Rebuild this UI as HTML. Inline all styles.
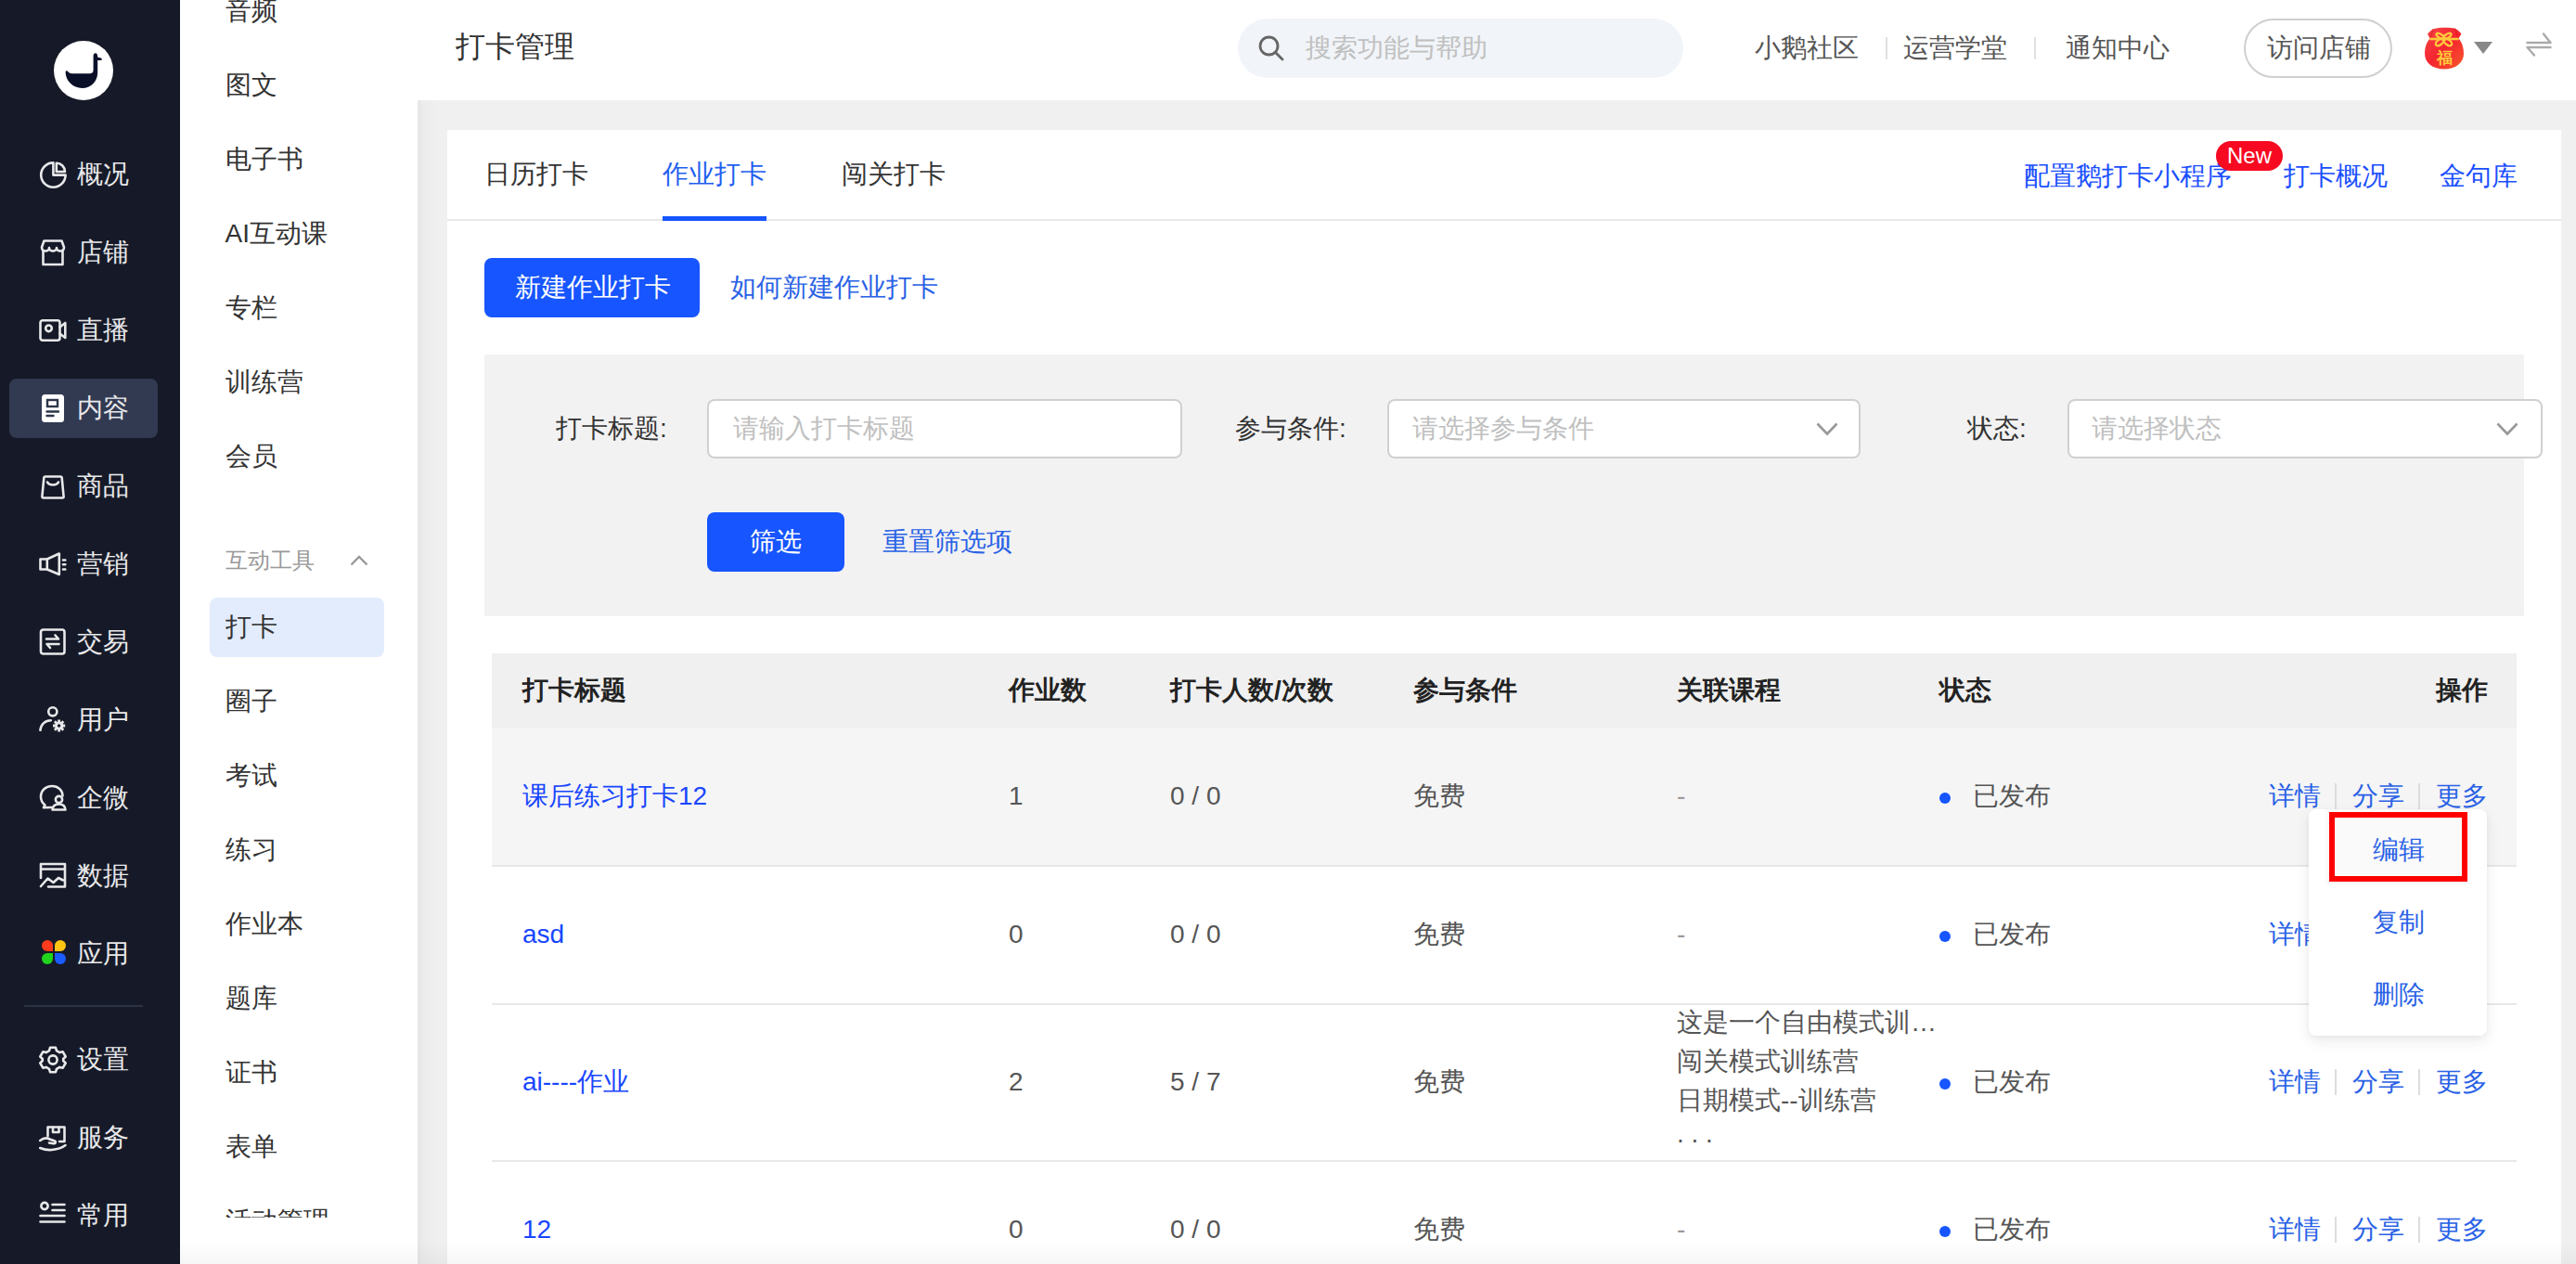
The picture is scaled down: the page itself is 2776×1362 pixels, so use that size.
<!DOCTYPE html><html><head><meta charset="utf-8"><style>
*{margin:0;padding:0;box-sizing:border-box}
html,body{width:2776px;height:1362px;overflow:hidden;background:#fff;font-family:"Liberation Sans",sans-serif}
.t{position:absolute;white-space:nowrap}
svg{position:absolute;overflow:visible}
</style></head><body><div style="position:absolute;left:0px;top:0px;width:194px;height:1362px;background:#161a28"></div>
<svg style="left:58px;top:44px" width="64" height="64" viewBox="0 0 64 64">
<circle cx="32" cy="32" r="32" fill="#fff"/>
<path fill="#0b1029" d="M12.6,33.6 C12.6,32 14.2,31.6 15.2,33 C16.2,34.4 17.4,35.2 19.4,35.2 L39.2,35.2 C41.2,35.2 42.6,33.8 42.6,31.6 L42.6,16.2 C42.6,14.2 43.6,13.2 45,13.2 C46.2,13.2 46.8,14.2 47,15.8 L47.2,17.6 L50.6,18.4 C52.2,18.8 52.2,21 50.6,21 L47.2,21 L47.2,34.2 C47.2,43.6 39.8,51 30.6,51 C20.6,51 12.6,43.2 12.6,33.6 Z"/>
</svg>
<div style="position:absolute;left:10px;top:408px;width:160px;height:64px;background:#323a52;border-radius:8px"></div>
<div class="t" style="left:83px;top:167.7px;font-size:28px;line-height:40px;color:#e8e8ea;font-weight:400;">概况</div>
<div class="t" style="left:83px;top:251.7px;font-size:28px;line-height:40px;color:#e8e8ea;font-weight:400;">店铺</div>
<div class="t" style="left:83px;top:335.7px;font-size:28px;line-height:40px;color:#e8e8ea;font-weight:400;">直播</div>
<div class="t" style="left:83px;top:419.7px;font-size:28px;line-height:40px;color:#e8e8ea;font-weight:400;">内容</div>
<div class="t" style="left:83px;top:503.7px;font-size:28px;line-height:40px;color:#e8e8ea;font-weight:400;">商品</div>
<div class="t" style="left:83px;top:587.7px;font-size:28px;line-height:40px;color:#e8e8ea;font-weight:400;">营销</div>
<div class="t" style="left:83px;top:671.7px;font-size:28px;line-height:40px;color:#e8e8ea;font-weight:400;">交易</div>
<div class="t" style="left:83px;top:755.7px;font-size:28px;line-height:40px;color:#e8e8ea;font-weight:400;">用户</div>
<div class="t" style="left:83px;top:839.7px;font-size:28px;line-height:40px;color:#e8e8ea;font-weight:400;">企微</div>
<div class="t" style="left:83px;top:923.7px;font-size:28px;line-height:40px;color:#e8e8ea;font-weight:400;">数据</div>
<div class="t" style="left:83px;top:1007.7px;font-size:28px;line-height:40px;color:#e8e8ea;font-weight:400;">应用</div>
<div class="t" style="left:83px;top:1121.5px;font-size:28px;line-height:40px;color:#e8e8ea;font-weight:400;">设置</div>
<div class="t" style="left:83px;top:1205.5px;font-size:28px;line-height:40px;color:#e8e8ea;font-weight:400;">服务</div>
<div class="t" style="left:83px;top:1289.5px;font-size:28px;line-height:40px;color:#e8e8ea;font-weight:400;">常用</div>
<div style="position:absolute;left:26px;top:1083px;width:128px;height:2px;background:#2b3244"></div>
<svg style="left:42px;top:173px" width="30" height="30" viewBox="0 0 30 30"><g stroke="#e8e8ea" stroke-width="2.6" fill="none" stroke-linecap="round" stroke-linejoin="round"><path d="M15.4,2.4 A13.2,13.2 0 1 0 28.6,15.6 L15.4,15.6 Z"/><path d="M18.8,2.8 A9.2,9.2 0 0 1 28,12 L18.8,12 Z"/></g></svg>
<svg style="left:42px;top:257px" width="30" height="30" viewBox="0 0 30 30"><g stroke="#e8e8ea" stroke-width="2.6" fill="none" stroke-linecap="round" stroke-linejoin="round"><path d="M4.5,13 L4.5,28 L25.5,28 L25.5,13"/><path d="M5.5,2.5 L24.5,2.5 L27,9.5 C27,12 25.2,13.5 23,13.5 C20.8,13.5 19,12 19,10 C19,12 17,13.5 15,13.5 C13,13.5 11,12 11,10 C11,12 9.2,13.5 7,13.5 C4.8,13.5 3,12 3,9.5 Z"/></g></svg>
<svg style="left:42px;top:341px" width="30" height="30" viewBox="0 0 30 30"><g stroke="#e8e8ea" stroke-width="2.6" fill="none" stroke-linecap="round" stroke-linejoin="round"><rect x="1.5" y="4.3" width="21" height="21.4" rx="2.5"/><path d="M22.5,11.5 L28.3,7 L28.3,23 L22.5,18.5"/><circle cx="10.5" cy="12.8" r="3.3"/></g></svg>
<svg style="left:45px;top:425px" width="24" height="30" viewBox="0 0 24 30">
<rect x="0" y="0" width="24" height="30" rx="3.5" fill="#fff"/>
<rect x="6" y="6" width="11" height="7" fill="none" stroke="#2d354a" stroke-width="2.4"/>
<path d="M5.5,18.5 L18,18.5 M5.5,23 L12.5,23" stroke="#2d354a" stroke-width="2.4" stroke-linecap="round"/>
</svg>
<svg style="left:42px;top:509px" width="30" height="30" viewBox="0 0 30 30"><g stroke="#e8e8ea" stroke-width="2.6" fill="none" stroke-linecap="round" stroke-linejoin="round"><path d="M7,4.5 L23,4.5 C24,4.5 24.6,5 24.7,6 L26.6,26 C26.7,27 26.2,27.5 25.2,27.5 L4.8,27.5 C3.8,27.5 3.3,27 3.4,26 L5.3,6 C5.4,5 6,4.5 7,4.5 Z"/><path d="M9,10.5 C11,14.5 19,14.5 21,10.5"/></g></svg>
<svg style="left:42px;top:593px" width="30" height="30" viewBox="0 0 30 30"><g stroke="#e8e8ea" stroke-width="2.6" fill="none" stroke-linecap="round" stroke-linejoin="round"><path d="M1.5,9.5 L8.8,9.5 L21.8,3.5 L21.8,26 L8.8,20.5 L1.5,20.5 Z"/><path d="M8.8,9.5 L8.8,20.5"/><path d="M26,10.5 L28.3,10.5 M26,15.2 L28.3,15.2 M26,20.5 L28.3,20.5"/></g></svg>
<svg style="left:42px;top:677px" width="30" height="30" viewBox="0 0 30 30"><g stroke="#e8e8ea" stroke-width="2.6" fill="none" stroke-linecap="round" stroke-linejoin="round"><rect x="2" y="1.5" width="25.5" height="26" rx="2.5"/><path d="M8,11.5 L21,11.5 L17.5,7.5 M21.5,17 L8.5,17 L12,21"/></g></svg>
<svg style="left:42px;top:761px" width="30" height="30" viewBox="0 0 30 30"><g stroke="#e8e8ea" stroke-width="2.6" fill="none" stroke-linecap="round" stroke-linejoin="round"><circle cx="14.8" cy="5.8" r="4.6"/><path d="M1.4,25.8 C2,19.5 6.8,15.2 12.8,15.2"/></g><g fill="#e8e8ea"><circle cx="21.6" cy="21" r="4.6"/></g><g stroke="#e8e8ea" stroke-width="2.8" stroke-linecap="butt"><path d="M21.6,14.4 L21.6,27.6 M15,21 L28.2,21 M16.9,16.3 L26.3,25.7 M26.3,16.3 L16.9,25.7"/></g><circle cx="21.6" cy="21" r="1.7" fill="#161a28"/></svg>
<svg style="left:42px;top:845px" width="30" height="30" viewBox="0 0 30 30"><g stroke="#e8e8ea" stroke-width="2.6" fill="none" stroke-linecap="round" stroke-linejoin="round"><path d="M13.5,25 L5,25.2 L6.5,22.5 C3.5,20.2 2,17 2,13.5 C2,7 7.2,2 14,2 C20.8,2 25.5,6.8 25.5,12.5"/><circle cx="21.5" cy="16.5" r="3.6"/><path d="M14.5,27.5 C14.8,23.5 17.8,21.5 21.5,21.5 C25.2,21.5 28.2,23.5 28.5,27.5 Z"/></g></svg>
<svg style="left:42px;top:929px" width="30" height="30" viewBox="0 0 30 30"><g stroke="#e8e8ea" stroke-width="2.6" fill="none" stroke-linecap="round" stroke-linejoin="round"><path d="M2,2 L28,2 L28,26.5 L10,26.5 M2,2 L2,17 M2,7.5 L28,7.5"/><path d="M2,26 L9.5,17.5 L15.5,22 L21,17 L26,19.5"/></g></svg>
<svg style="left:45px;top:1012.8px" width="26" height="26" viewBox="0 0 26 26">
<path d="M12,12 L6,12 A6,6 0 1 1 12,6 Z" fill="#fb3b1b"/>
<path d="M14,12 L20,12 A6,6 0 1 0 14,6 Z" fill="#fec414"/>
<path d="M12,14 L6,14 A6,6 0 1 0 12,20 Z" fill="#1fd41b"/>
<path d="M14,14 L20,14 A6,6 0 1 1 14,20 Z" fill="#1a5cff"/>
</svg>
<svg style="left:42px;top:1127px" width="30" height="30" viewBox="0 0 30 30"><g stroke="#e8e8ea" stroke-width="2.6" fill="none" stroke-linecap="round" stroke-linejoin="round"><path d="M12,1.8 L18,1.8 L19,5.2 L22.3,7.1 L25.7,6.3 L28.7,11.5 L26.2,14 L26.2,16 L28.7,18.5 L25.7,23.7 L22.3,22.9 L19,24.8 L18,28.2 L12,28.2 L11,24.8 L7.7,22.9 L4.3,23.7 L1.3,18.5 L3.8,16 L3.8,14 L1.3,11.5 L4.3,6.3 L7.7,7.1 L11,5.2 Z"/><circle cx="15" cy="15" r="4.6"/></g></svg>
<svg style="left:42px;top:1213px" width="30" height="30" viewBox="0 0 30 30"><g stroke="#e8e8ea" stroke-width="2.6" fill="none" stroke-linecap="round" stroke-linejoin="round"><path d="M9.5,11 L9.5,1.5 L27.5,1.5 L27.5,17 L22,17"/><path d="M15,1.5 L15,7 L21.5,7 L21.5,1.5"/><path d="M1.2,16 C4.5,13.5 8,12.5 11.5,14.5 L17,16.5 C18.5,17.2 18,19.5 16,19.2 L11,18.5"/><path d="M1.2,24 C5,25.5 9,26.5 14,26 C19,25.5 24.5,24 28.5,21"/></g></svg>
<svg style="left:42px;top:1295px" width="30" height="30" viewBox="0 0 30 30"><g stroke="#e8e8ea" stroke-width="2.6" fill="none" stroke-linecap="round" stroke-linejoin="round"><circle cx="6" cy="4.5" r="3.6"/><path d="M14.5,3 L27.5,3 M14.5,9 L27.5,9 M1.5,15 L27.5,15 M1.5,21.5 L27.5,21.5"/></g></svg>
<div style="position:absolute;left:194px;top:0px;width:256px;height:1362px;background:#fff"></div>
<div class="t" style="left:242.5px;top:-8.5px;font-size:28px;line-height:40px;color:#333;font-weight:400;">音频</div>
<div class="t" style="left:242.5px;top:71.5px;font-size:28px;line-height:40px;color:#333;font-weight:400;">图文</div>
<div class="t" style="left:242.5px;top:151.5px;font-size:28px;line-height:40px;color:#333;font-weight:400;">电子书</div>
<div class="t" style="left:242.5px;top:231.5px;font-size:28px;line-height:40px;color:#333;font-weight:400;">AI互动课</div>
<div class="t" style="left:242.5px;top:311.5px;font-size:28px;line-height:40px;color:#333;font-weight:400;">专栏</div>
<div class="t" style="left:242.5px;top:391.5px;font-size:28px;line-height:40px;color:#333;font-weight:400;">训练营</div>
<div class="t" style="left:242.5px;top:471.5px;font-size:28px;line-height:40px;color:#333;font-weight:400;">会员</div>
<div class="t" style="left:243px;top:583.5px;font-size:24px;line-height:40px;color:#999;font-weight:400;">互动工具</div>
<svg style="left:377px;top:598px" width="20" height="12" viewBox="0 0 20 12"><path d="M1.5,10.5 L10,2 L18.5,10.5" stroke="#999" stroke-width="2.4" fill="none"/></svg>
<div style="position:absolute;left:226px;top:644px;width:188px;height:64px;background:#e2ecfd;border-radius:8px"></div>
<div class="t" style="left:242.5px;top:655.5px;font-size:28px;line-height:40px;color:#333;font-weight:400;">打卡</div>
<div class="t" style="left:242.5px;top:735.5px;font-size:28px;line-height:40px;color:#333;font-weight:400;">圈子</div>
<div class="t" style="left:242.5px;top:815.5px;font-size:28px;line-height:40px;color:#333;font-weight:400;">考试</div>
<div class="t" style="left:242.5px;top:895.5px;font-size:28px;line-height:40px;color:#333;font-weight:400;">练习</div>
<div class="t" style="left:242.5px;top:975.5px;font-size:28px;line-height:40px;color:#333;font-weight:400;">作业本</div>
<div class="t" style="left:242.5px;top:1055.5px;font-size:28px;line-height:40px;color:#333;font-weight:400;">题库</div>
<div class="t" style="left:242.5px;top:1135.5px;font-size:28px;line-height:40px;color:#333;font-weight:400;">证书</div>
<div class="t" style="left:242.5px;top:1215.5px;font-size:28px;line-height:40px;color:#333;font-weight:400;">表单</div>
<div style="position:absolute;left:194px;top:1280px;width:256px;height:31.5px;overflow:hidden"><div class="t" style="left:48.5px;top:15.5px;font-size:28px;line-height:40px;color:#333">活动管理</div></div>
<div style="position:absolute;left:450px;top:0px;width:2326px;height:108px;background:#fff"></div>
<div class="t" style="left:491px;top:27.7px;font-size:32px;line-height:44px;color:#333;font-weight:400;">打卡管理</div>
<div style="position:absolute;left:1334px;top:20px;width:480px;height:64px;background:#f1f4f8;border-radius:32px"></div>
<svg style="left:1356px;top:38px" width="28" height="28" viewBox="0 0 28 28"><circle cx="11.5" cy="11.5" r="9.5" stroke="#666" stroke-width="2.8" fill="none"/><path d="M18.5,18.5 L26,26" stroke="#666" stroke-width="2.8" stroke-linecap="round"/></svg>
<div class="t" style="left:1407px;top:32.0px;font-size:28px;line-height:40px;color:#c0c0c0;font-weight:400;">搜索功能与帮助</div>
<div class="t" style="left:1891px;top:31.5px;font-size:28px;line-height:40px;color:#555;font-weight:400;">小鹅社区</div>
<div style="position:absolute;left:2032px;top:40px;width:2px;height:24px;background:#e0e0e0"></div>
<div class="t" style="left:2051px;top:31.5px;font-size:28px;line-height:40px;color:#555;font-weight:400;">运营学堂</div>
<div style="position:absolute;left:2192px;top:40px;width:2px;height:24px;background:#e0e0e0"></div>
<div class="t" style="left:2226px;top:31.5px;font-size:28px;line-height:40px;color:#555;font-weight:400;">通知中心</div>
<div style="position:absolute;left:2418px;top:20px;width:160px;height:64px;border:2px solid #cfcfcf;border-radius:32px;background:#fff"></div>
<div class="t" style="left:2443px;top:31.5px;font-size:28px;line-height:40px;color:#555;font-weight:400;">访问店铺</div>
<svg style="left:2605px;top:22px" width="60" height="60" viewBox="0 0 60 60">
<defs><linearGradient id="bg1" x1="0" y1="0" x2="1" y2="1"><stop offset="0" stop-color="#f44848"/><stop offset="0.5" stop-color="#f42530"/><stop offset="0.85" stop-color="#f64a2c"/><stop offset="1" stop-color="#fd8a38"/></linearGradient></defs>
<path d="M11,14.5 C14,11 16,9.5 18,9 C23,7.5 34,7.3 40,8.5 C43,9.5 45.5,12 47.5,14.5 L44.5,19.5 C48.5,24 50,30 50,36 C50,46 41,52.5 29,52.5 C17,52.5 8,46 8,36 C8,30 9.5,24 13.5,19.5 Z" fill="url(#bg1)"/>
<path d="M17,9.5 L14,19 M40.5,8.8 L44,19" stroke="#e0101a" stroke-width="1.2" opacity="0.5"/>
<path d="M13.3,20 L44.6,20" stroke="#ffc93c" stroke-width="2.6"/>
<g stroke="#ffc93c" stroke-width="2.4" fill="none">
<ellipse cx="24.6" cy="16.8" rx="4.6" ry="2.1" transform="rotate(32 24.6 16.8)"/>
<ellipse cx="32.4" cy="16.8" rx="4.6" ry="2.1" transform="rotate(-32 32.4 16.8)"/>
<ellipse cx="24" cy="23.6" rx="4.8" ry="2.8" transform="rotate(-38 24 23.6)"/>
<ellipse cx="33" cy="23.6" rx="4.8" ry="2.8" transform="rotate(38 33 23.6)"/>
</g>
<circle cx="28.5" cy="20" r="2.2" fill="#ffc93c"/>
<text x="29.2" y="45.5" font-size="17" text-anchor="middle" fill="#ffc93c" font-weight="700" font-family="Liberation Sans, sans-serif">福</text>
</svg>
<svg style="left:2666px;top:45px" width="20" height="13" viewBox="0 0 20 13"><path d="M0,0 L20,0 L10,13 Z" fill="#888"/></svg>
<svg style="left:2722px;top:35px" width="28" height="26" viewBox="0 0 28 26"><path d="M1.5,11 L26.5,11 L19,1.5 M26.5,16 L1.5,16 L9,24.5" stroke="#aaa" stroke-width="2.4" fill="none" stroke-linecap="round" stroke-linejoin="round"/></svg>
<div style="position:absolute;left:450px;top:108px;width:2326px;height:1254px;background:#f0f0f0"></div>
<div style="position:absolute;left:450px;top:108px;width:32px;height:1254px;background:linear-gradient(90deg,#e6e6e6 0px,#ececec 6px,#f0f0f0 22px)"></div>
<div style="position:absolute;left:482px;top:140px;width:2278px;height:1222px;background:#fff"></div>
<div class="t" style="left:522px;top:167.6px;font-size:28px;line-height:40px;color:#333;font-weight:400;">日历打卡</div>
<div class="t" style="left:714px;top:167.6px;font-size:28px;line-height:40px;color:#1f5ff0;font-weight:400;">作业打卡</div>
<div class="t" style="left:907px;top:167.6px;font-size:28px;line-height:40px;color:#333;font-weight:400;">闯关打卡</div>
<div style="position:absolute;left:482px;top:236px;width:2278px;height:2px;background:#e8e8e8"></div>
<div style="position:absolute;left:714px;top:233px;width:112px;height:5px;background:#1655ff"></div>
<div class="t" style="left:2181px;top:170.0px;font-size:28px;line-height:40px;color:#1a4fff;font-weight:400;">配置鹅打卡小程序</div>
<div style="position:absolute;left:2388px;top:152px;width:72px;height:32px;background:#f70a21;border-radius:16px"></div>
<div class="t" style="left:2388px;top:152px;width:72px;height:32px;font-size:24px;line-height:32px;color:#fff;text-align:center">New</div>
<div class="t" style="left:2461px;top:170.0px;font-size:28px;line-height:40px;color:#1a4fff;font-weight:400;">打卡概况</div>
<div class="t" style="left:2629px;top:170.0px;font-size:28px;line-height:40px;color:#1a4fff;font-weight:400;">金句库</div>
<div style="position:absolute;left:522px;top:278px;width:232px;height:64px;background:#1655ff;border-radius:8px"></div>
<div class="t" style="left:555px;top:290.0px;font-size:28px;line-height:40px;color:#fff;font-weight:400;">新建作业打卡</div>
<div class="t" style="left:787px;top:290.0px;font-size:28px;line-height:40px;color:#2a62e6;font-weight:400;">如何新建作业打卡</div>
<div style="position:absolute;left:522px;top:382px;width:2198px;height:282px;background:#f2f2f2"></div>
<div class="t" style="left:599px;top:442.0px;font-size:28px;line-height:40px;color:#333;font-weight:400;">打卡标题:</div>
<div style="position:absolute;left:762px;top:430px;width:512px;height:64px;background:#fff;border:2px solid #d0d0d0;border-radius:8px"></div>
<div class="t" style="left:790px;top:442.0px;font-size:28px;line-height:40px;color:#c0c0c0;font-weight:400;">请输入打卡标题</div>
<div class="t" style="left:1331px;top:442.0px;font-size:28px;line-height:40px;color:#333;font-weight:400;">参与条件:</div>
<div style="position:absolute;left:1495px;top:430px;width:510px;height:64px;background:#fff;border:2px solid #d0d0d0;border-radius:8px"></div>
<div class="t" style="left:1522px;top:442.0px;font-size:28px;line-height:40px;color:#c0c0c0;font-weight:400;">请选择参与条件</div>
<svg style="left:1957px;top:454px" width="24" height="16" viewBox="0 0 24 16"><path d="M1.5,2.5 L12,13.5 L22.5,2.5" stroke="#999" stroke-width="2.6" fill="none"/></svg>
<div class="t" style="left:2120px;top:442.0px;font-size:28px;line-height:40px;color:#333;font-weight:400;">状态:</div>
<div style="position:absolute;left:2228px;top:430px;width:512px;height:64px;background:#fff;border:2px solid #d0d0d0;border-radius:8px"></div>
<div class="t" style="left:2254px;top:442.0px;font-size:28px;line-height:40px;color:#c0c0c0;font-weight:400;">请选择状态</div>
<svg style="left:2690px;top:454px" width="24" height="16" viewBox="0 0 24 16"><path d="M1.5,2.5 L12,13.5 L22.5,2.5" stroke="#999" stroke-width="2.6" fill="none"/></svg>
<div style="position:absolute;left:762px;top:552px;width:148px;height:64px;background:#1655ff;border-radius:8px"></div>
<div class="t" style="left:808px;top:564.0px;font-size:28px;line-height:40px;color:#fff;font-weight:400;">筛选</div>
<div class="t" style="left:951px;top:564.0px;font-size:28px;line-height:40px;color:#2a62e6;font-weight:400;">重置筛选项</div>
<div style="position:absolute;left:530px;top:704px;width:2182px;height:80px;background:#f0f0f0"></div>
<div class="t" style="left:563px;top:723.5px;font-size:28px;line-height:40px;color:#222;font-weight:700;">打卡标题</div>
<div class="t" style="left:1087px;top:723.5px;font-size:28px;line-height:40px;color:#222;font-weight:700;">作业数</div>
<div class="t" style="left:1261px;top:723.5px;font-size:28px;line-height:40px;color:#222;font-weight:700;">打卡人数/次数</div>
<div class="t" style="left:1523px;top:723.5px;font-size:28px;line-height:40px;color:#222;font-weight:700;">参与条件</div>
<div class="t" style="left:1807px;top:723.5px;font-size:28px;line-height:40px;color:#222;font-weight:700;">关联课程</div>
<div class="t" style="left:2090px;top:723.5px;font-size:28px;line-height:40px;color:#222;font-weight:700;">状态</div>
<div class="t" style="left:2625px;top:723.5px;font-size:28px;line-height:40px;color:#222;font-weight:700;">操作</div>
<div style="position:absolute;left:530px;top:784px;width:2182px;height:148px;background:#f5f5f5"></div>
<div style="position:absolute;left:530px;top:932px;width:2182px;height:2px;background:#e8e8e8"></div>
<div style="position:absolute;left:530px;top:1081px;width:2182px;height:2px;background:#e8e8e8"></div>
<div style="position:absolute;left:530px;top:1250px;width:2182px;height:2px;background:#e8e8e8"></div>
<div class="t" style="left:563px;top:837.5px;font-size:28px;line-height:40px;color:#1846ff;font-weight:400;">课后练习打卡12</div>
<div class="t" style="left:1087px;top:837.5px;font-size:28px;line-height:40px;color:#555;font-weight:400;">1</div>
<div class="t" style="left:1261px;top:837.5px;font-size:28px;line-height:40px;color:#555;font-weight:400;">0 / 0</div>
<div class="t" style="left:1523px;top:837.5px;font-size:28px;line-height:40px;color:#555;font-weight:400;">免费</div>
<div class="t" style="left:1807px;top:837.5px;font-size:28px;line-height:40px;color:#999;font-weight:400;">-</div>
<div style="position:absolute;left:2090px;top:853.5px;width:12px;height:12px;background:#1655ff;border-radius:50%"></div>
<div class="t" style="left:2126px;top:837.5px;font-size:28px;line-height:40px;color:#555;font-weight:400;">已发布</div>
<div class="t" style="left:2445px;top:837.5px;font-size:28px;line-height:40px;color:#2a62e6;font-weight:400;">详情</div>
<div style="position:absolute;left:2516px;top:843.5px;width:2px;height:28px;background:#ddd"></div>
<div class="t" style="left:2535px;top:837.5px;font-size:28px;line-height:40px;color:#2a62e6;font-weight:400;">分享</div>
<div style="position:absolute;left:2606px;top:843.5px;width:2px;height:28px;background:#ddd"></div>
<div class="t" style="left:2625px;top:837.5px;font-size:28px;line-height:40px;color:#2a62e6;font-weight:400;">更多</div>
<div class="t" style="left:563px;top:986.5px;font-size:28px;line-height:40px;color:#1846ff;font-weight:400;">asd</div>
<div class="t" style="left:1087px;top:986.5px;font-size:28px;line-height:40px;color:#555;font-weight:400;">0</div>
<div class="t" style="left:1261px;top:986.5px;font-size:28px;line-height:40px;color:#555;font-weight:400;">0 / 0</div>
<div class="t" style="left:1523px;top:986.5px;font-size:28px;line-height:40px;color:#555;font-weight:400;">免费</div>
<div class="t" style="left:1807px;top:986.5px;font-size:28px;line-height:40px;color:#999;font-weight:400;">-</div>
<div style="position:absolute;left:2090px;top:1002.5px;width:12px;height:12px;background:#1655ff;border-radius:50%"></div>
<div class="t" style="left:2126px;top:986.5px;font-size:28px;line-height:40px;color:#555;font-weight:400;">已发布</div>
<div class="t" style="left:2445px;top:986.5px;font-size:28px;line-height:40px;color:#2a62e6;font-weight:400;">详情</div>
<div style="position:absolute;left:2516px;top:992.5px;width:2px;height:28px;background:#ddd"></div>
<div class="t" style="left:2535px;top:986.5px;font-size:28px;line-height:40px;color:#2a62e6;font-weight:400;">分享</div>
<div style="position:absolute;left:2606px;top:992.5px;width:2px;height:28px;background:#ddd"></div>
<div class="t" style="left:2625px;top:986.5px;font-size:28px;line-height:40px;color:#2a62e6;font-weight:400;">更多</div>
<div class="t" style="left:563px;top:1145.5px;font-size:28px;line-height:40px;color:#1846ff;font-weight:400;">ai----作业</div>
<div class="t" style="left:1087px;top:1145.5px;font-size:28px;line-height:40px;color:#555;font-weight:400;">2</div>
<div class="t" style="left:1261px;top:1145.5px;font-size:28px;line-height:40px;color:#555;font-weight:400;">5 / 7</div>
<div class="t" style="left:1523px;top:1145.5px;font-size:28px;line-height:40px;color:#555;font-weight:400;">免费</div>
<div style="position:absolute;left:2090px;top:1161.5px;width:12px;height:12px;background:#1655ff;border-radius:50%"></div>
<div class="t" style="left:2126px;top:1145.5px;font-size:28px;line-height:40px;color:#555;font-weight:400;">已发布</div>
<div class="t" style="left:2445px;top:1145.5px;font-size:28px;line-height:40px;color:#2a62e6;font-weight:400;">详情</div>
<div style="position:absolute;left:2516px;top:1151.5px;width:2px;height:28px;background:#ddd"></div>
<div class="t" style="left:2535px;top:1145.5px;font-size:28px;line-height:40px;color:#2a62e6;font-weight:400;">分享</div>
<div style="position:absolute;left:2606px;top:1151.5px;width:2px;height:28px;background:#ddd"></div>
<div class="t" style="left:2625px;top:1145.5px;font-size:28px;line-height:40px;color:#2a62e6;font-weight:400;">更多</div>
<div class="t" style="left:563px;top:1304.5px;font-size:28px;line-height:40px;color:#1846ff;font-weight:400;">12</div>
<div class="t" style="left:1087px;top:1304.5px;font-size:28px;line-height:40px;color:#555;font-weight:400;">0</div>
<div class="t" style="left:1261px;top:1304.5px;font-size:28px;line-height:40px;color:#555;font-weight:400;">0 / 0</div>
<div class="t" style="left:1523px;top:1304.5px;font-size:28px;line-height:40px;color:#555;font-weight:400;">免费</div>
<div class="t" style="left:1807px;top:1304.5px;font-size:28px;line-height:40px;color:#999;font-weight:400;">-</div>
<div style="position:absolute;left:2090px;top:1320.5px;width:12px;height:12px;background:#1655ff;border-radius:50%"></div>
<div class="t" style="left:2126px;top:1304.5px;font-size:28px;line-height:40px;color:#555;font-weight:400;">已发布</div>
<div class="t" style="left:2445px;top:1304.5px;font-size:28px;line-height:40px;color:#2a62e6;font-weight:400;">详情</div>
<div style="position:absolute;left:2516px;top:1310.5px;width:2px;height:28px;background:#ddd"></div>
<div class="t" style="left:2535px;top:1304.5px;font-size:28px;line-height:40px;color:#2a62e6;font-weight:400;">分享</div>
<div style="position:absolute;left:2606px;top:1310.5px;width:2px;height:28px;background:#ddd"></div>
<div class="t" style="left:2625px;top:1304.5px;font-size:28px;line-height:40px;color:#2a62e6;font-weight:400;">更多</div>
<div class="t" style="left:1807px;top:1081.5px;font-size:28px;line-height:40px;color:#555;font-weight:400;">这是一个自由模式训…</div>
<div class="t" style="left:1807px;top:1123.5px;font-size:28px;line-height:40px;color:#555;font-weight:400;">闯关模式训练营</div>
<div class="t" style="left:1807px;top:1165.5px;font-size:28px;line-height:40px;color:#555;font-weight:400;">日期模式--训练营</div>
<div class="t" style="left:1807px;top:1202.0px;font-size:28px;line-height:40px;color:#555;font-weight:400;">. . .</div>
<div style="position:absolute;left:2488px;top:872px;width:192px;height:244px;background:#fff;border-radius:8px;box-shadow:0 6px 16px rgba(0,0,0,0.08),0 2px 6px rgba(0,0,0,0.04)"></div>
<div style="position:absolute;left:2506px;top:872px;width:157px;height:81px;background:#fafafa"></div>
<div style="position:absolute;left:2510px;top:875px;width:149px;height:75px;border:6px solid #ff0000"></div>
<div class="t" style="left:2557px;top:895.8px;font-size:28px;line-height:40px;color:#2a62e6;font-weight:400;">编辑</div>
<div class="t" style="left:2557px;top:973.7px;font-size:28px;line-height:40px;color:#2a62e6;font-weight:400;">复制</div>
<div class="t" style="left:2557px;top:1051.8px;font-size:28px;line-height:40px;color:#2a62e6;font-weight:400;">删除</div>
<div style="position:absolute;left:194px;top:1336px;width:2582px;height:26px;background:linear-gradient(180deg,rgba(0,0,0,0),rgba(0,0,0,0.035))"></div></body></html>
